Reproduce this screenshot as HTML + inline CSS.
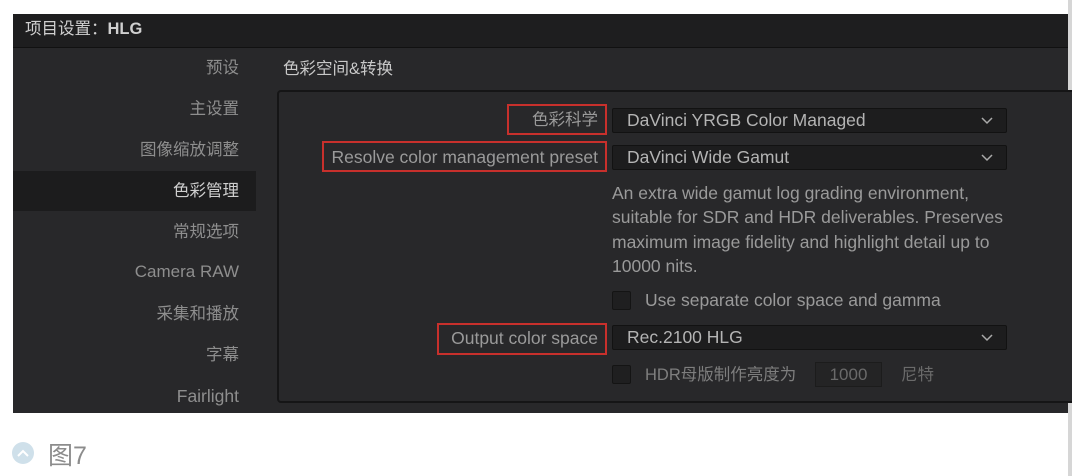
<!DOCTYPE html>
<html><head><meta charset="utf-8"><style>
body{margin:0;width:1072px;height:476px;background:#fff;position:relative;overflow:hidden;font-family:"Liberation Sans","Noto Sans CJK SC",sans-serif}
.a{position:absolute}
.win{left:13px;top:14px;width:1055px;height:399px;background:#28282a}
.title{left:13px;top:14px;width:1055px;height:33px;background:#1e1e1f;border-bottom:1px solid #111}
.t{color:#c8c8c8;font-size:16px;white-space:nowrap;line-height:20px}
.side{width:226px;text-align:right;color:#8e8e8e;font-size:16.5px;left:13px;line-height:20px;height:20px}
.lbl{color:#9a9a9a;font-size:17.5px;text-align:right;white-space:nowrap;line-height:20px}
.red{border:2px solid #c8302c;box-sizing:border-box}
.dd{left:612px;width:395px;height:25px;background:#1d1d1e;border:1px solid #121212;box-sizing:border-box;border-radius:2px;color:#b4b4b4;font-size:17.5px;line-height:23px;padding-left:14px}
.dd svg{position:absolute;right:13px;top:8px}
.cb{width:19px;height:19px;background:#1f1f20;border:1px solid #141414;box-sizing:border-box;border-radius:2px;left:612px}
</style></head><body>
<div class="a win"></div>
<div class="a title"></div>
<div class="a t" style="left:25px;top:19px;color:#d0d0d0;font-size:16.5px">项目设置：<b>HLG</b></div>
<div class="a" style="left:1068px;top:0;width:4px;height:476px;background:#d6d6d6"></div>
<div class="a" style="left:13px;top:171px;width:243px;height:40px;background:#1c1c1d"></div>
<div class="a side" style="top:58px">预设</div>
<div class="a side" style="top:99px">主设置</div>
<div class="a side" style="top:140px">图像缩放调整</div>
<div class="a side" style="top:181px;color:#cfcfcf">色彩管理</div>
<div class="a side" style="top:222px">常规选项</div>
<div class="a side" style="top:262px;font-size:17px">Camera RAW</div>
<div class="a side" style="top:304px">采集和播放</div>
<div class="a side" style="top:345px">字幕</div>
<div class="a side" style="top:386px;font-size:17.5px">Fairlight</div>
<div class="a t" style="left:283px;top:59px;font-size:16.5px">色彩空间&amp;转换</div>
<div class="a" style="left:277px;top:90px;width:800px;height:313px;border:2px solid #151516;border-radius:4px;box-sizing:border-box;background:#28282a"></div>
<div class="a red" style="left:507px;top:104px;width:100px;height:31px"></div>
<div class="a red" style="left:322px;top:141px;width:285px;height:31px"></div>
<div class="a red" style="left:437px;top:323px;width:170px;height:32px"></div>
<div class="a lbl" style="right:474px;top:110px;font-size:16.5px">色彩科学</div>
<div class="a lbl" style="right:474px;top:147px">Resolve color management preset</div>
<div class="a lbl" style="right:474px;top:328px">Output color space</div>
<div class="a dd" style="top:108px">DaVinci YRGB Color Managed<svg width="12" height="8"><path d="M1 1L6 6L11 1" stroke="#aaa" stroke-width="1.5" fill="none"/></svg></div>
<div class="a dd" style="top:145px">DaVinci Wide Gamut<svg width="12" height="8"><path d="M1 1L6 6L11 1" stroke="#aaa" stroke-width="1.5" fill="none"/></svg></div>
<div class="a dd" style="top:325px">Rec.2100 HLG<svg width="12" height="8"><path d="M1 1L6 6L11 1" stroke="#aaa" stroke-width="1.5" fill="none"/></svg></div>
<div class="a" style="left:612px;top:181px;width:440px;color:#9a9a9a;font-size:17.5px;line-height:24.3px;white-space:nowrap">An extra wide gamut log grading environment,<br>suitable for SDR and HDR deliverables. Preserves<br>maximum image fidelity and highlight detail up to<br>10000 nits.</div>
<div class="a cb" style="top:291px"></div>
<div class="a lbl" style="left:645px;top:290px;text-align:left">Use separate color space and gamma</div>
<div class="a cb" style="top:365px"></div>
<div class="a lbl" style="left:645px;top:365px;text-align:left;color:#7e7e7e;font-size:16.5px">HDR母版制作亮度为</div>
<div class="a" style="left:815px;top:362px;width:67px;height:25px;background:#242425;border:1px solid #1c1c1c;box-sizing:border-box;color:#6a6a6a;font-size:17px;text-align:center;line-height:23px">1000</div>
<div class="a lbl" style="left:901px;top:365px;color:#6a6a6a;font-size:16.5px">尼特</div>
<div class="a" style="left:12px;top:442px;width:22px;height:22px;border-radius:50%;background:#cfe0ea"></div>
<svg class="a" style="left:12px;top:442px" width="22" height="22"><path d="M6 14L11 9L16 14" stroke="#fff" stroke-width="2" fill="none"/></svg>
<div class="a" style="left:48px;top:436px;color:#8c8c8c;font-size:25px">图7</div>
</body></html>
